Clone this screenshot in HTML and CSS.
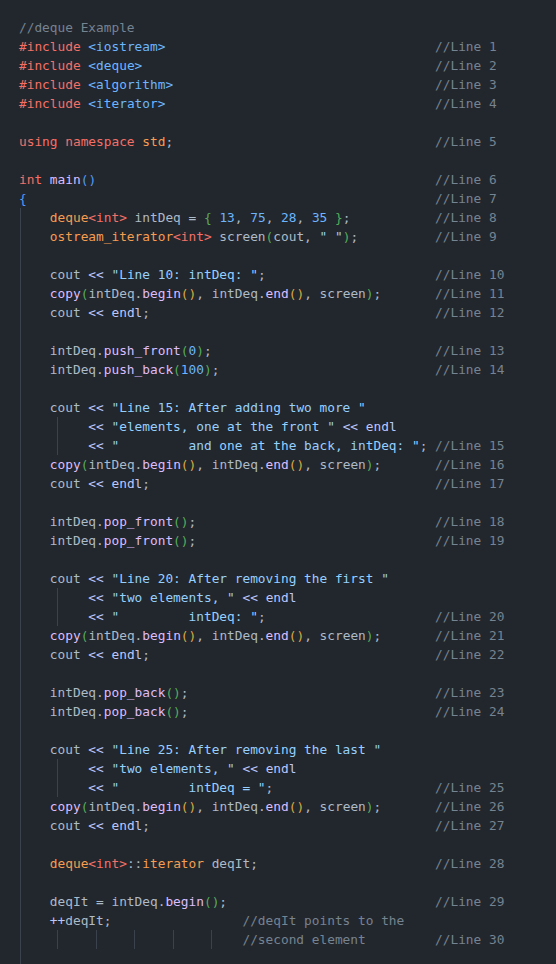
FILE: index.html
```html
<!DOCTYPE html>
<html lang="en">
<head>
<meta charset="utf-8">
<title>deque Example</title>
<link rel="stylesheet" href="styles.css">
</head>
<body>
<div class="code">
  <div class="r"><span><span class="c">//deque Example</span></span></div>
  <div class="r"><span><span class="k">#include</span> <span class="h">&lt;iostream&gt;</span></span><span class="c">//Line 1</span></div>
  <div class="r"><span><span class="k">#include</span> <span class="h">&lt;deque&gt;</span></span><span class="c">//Line 2</span></div>
  <div class="r"><span><span class="k">#include</span> <span class="h">&lt;algorithm&gt;</span></span><span class="c">//Line 3</span></div>
  <div class="r"><span><span class="k">#include</span> <span class="h">&lt;iterator&gt;</span></span><span class="c">//Line 4</span></div>
  <div class="r"></div>
  <div class="r"><span><span class="k">using namespace</span> <span class="t">std</span>;</span><span class="c">//Line 5</span></div>
  <div class="r"></div>
  <div class="r"><span><span class="k">int</span> <span class="f">main</span><span class="b1">()</span></span><span class="c">//Line 6</span></div>
  <div class="r"><span><span class="b1">{</span></span><span class="c">//Line 7</span></div>
  <div class="blk">
    <div class="r"><span>    <span class="t">deque</span><span class="k">&lt;int&gt;</span> intDeq = <span class="b2">{</span> <span class="n">13</span>, <span class="n">75</span>, <span class="n">28</span>, <span class="n">35</span> <span class="b2">}</span>;</span><span class="c">//Line 8</span></div>
    <div class="r"><span>    <span class="t">ostream_iterator</span><span class="k">&lt;int&gt;</span> screen<span class="b2">(</span>cout, <span class="s">" "</span><span class="b2">)</span>;</span><span class="c">//Line 9</span></div>
    <div class="r"></div>
    <div class="r"><span>    cout <span class="o">&lt;&lt;</span> <span class="s">"Line 10: intDeq: "</span>;</span><span class="c">//Line 10</span></div>
    <div class="r"><span>    <span class="f">copy</span><span class="b2">(</span>intDeq.<span class="f">begin</span><span class="b3">()</span>, intDeq.<span class="f">end</span><span class="b3">()</span>, screen<span class="b2">)</span>;</span><span class="c">//Line 11</span></div>
    <div class="r"><span>    cout <span class="o">&lt;&lt;</span> <span class="o">endl</span>;</span><span class="c">//Line 12</span></div>
    <div class="r"></div>
    <div class="r"><span>    intDeq.<span class="f">push_front</span><span class="b2">(</span><span class="n">0</span><span class="b2">)</span>;</span><span class="c">//Line 13</span></div>
    <div class="r"><span>    intDeq.<span class="f">push_back</span><span class="b2">(</span><span class="n">100</span><span class="b2">)</span>;</span><span class="c">//Line 14</span></div>
    <div class="r"></div>
    <div class="r"><span>    cout <span class="o">&lt;&lt;</span> <span class="s">"Line 15: After adding two more "</span></span></div>
    <div class="cont">
      <div class="r"><span>         <span class="o">&lt;&lt;</span> <span class="s">"elements, one at the front "</span> <span class="o">&lt;&lt;</span> <span class="o">endl</span></span></div>
      <div class="r"><span>         <span class="o">&lt;&lt;</span> <span class="s">"         and one at the back, intDeq: "</span>;</span><span class="c">//Line 15</span></div>
    </div>
    <div class="r"><span>    <span class="f">copy</span><span class="b2">(</span>intDeq.<span class="f">begin</span><span class="b3">()</span>, intDeq.<span class="f">end</span><span class="b3">()</span>, screen<span class="b2">)</span>;</span><span class="c">//Line 16</span></div>
    <div class="r"><span>    cout <span class="o">&lt;&lt;</span> <span class="o">endl</span>;</span><span class="c">//Line 17</span></div>
    <div class="r"></div>
    <div class="r"><span>    intDeq.<span class="f">pop_front</span><span class="b2">()</span>;</span><span class="c">//Line 18</span></div>
    <div class="r"><span>    intDeq.<span class="f">pop_front</span><span class="b2">()</span>;</span><span class="c">//Line 19</span></div>
    <div class="r"></div>
    <div class="r"><span>    cout <span class="o">&lt;&lt;</span> <span class="s">"Line 20: After removing the first "</span></span></div>
    <div class="cont">
      <div class="r"><span>         <span class="o">&lt;&lt;</span> <span class="s">"two elements, "</span> <span class="o">&lt;&lt;</span> <span class="o">endl</span></span></div>
      <div class="r"><span>         <span class="o">&lt;&lt;</span> <span class="s">"         intDeq: "</span>;</span><span class="c">//Line 20</span></div>
    </div>
    <div class="r"><span>    <span class="f">copy</span><span class="b2">(</span>intDeq.<span class="f">begin</span><span class="b3">()</span>, intDeq.<span class="f">end</span><span class="b3">()</span>, screen<span class="b2">)</span>;</span><span class="c">//Line 21</span></div>
    <div class="r"><span>    cout <span class="o">&lt;&lt;</span> <span class="o">endl</span>;</span><span class="c">//Line 22</span></div>
    <div class="r"></div>
    <div class="r"><span>    intDeq.<span class="f">pop_back</span><span class="b2">()</span>;</span><span class="c">//Line 23</span></div>
    <div class="r"><span>    intDeq.<span class="f">pop_back</span><span class="b2">()</span>;</span><span class="c">//Line 24</span></div>
    <div class="r"></div>
    <div class="r"><span>    cout <span class="o">&lt;&lt;</span> <span class="s">"Line 25: After removing the last "</span></span></div>
    <div class="cont">
      <div class="r"><span>         <span class="o">&lt;&lt;</span> <span class="s">"two elements, "</span> <span class="o">&lt;&lt;</span> <span class="o">endl</span></span></div>
      <div class="r"><span>         <span class="o">&lt;&lt;</span> <span class="s">"         intDeq = "</span>;</span><span class="c">//Line 25</span></div>
    </div>
    <div class="r"><span>    <span class="f">copy</span><span class="b2">(</span>intDeq.<span class="f">begin</span><span class="b3">()</span>, intDeq.<span class="f">end</span><span class="b3">()</span>, screen<span class="b2">)</span>;</span><span class="c">//Line 26</span></div>
    <div class="r"><span>    cout <span class="o">&lt;&lt;</span> <span class="o">endl</span>;</span><span class="c">//Line 27</span></div>
    <div class="r"></div>
    <div class="r"><span>    <span class="t">deque</span><span class="k">&lt;int&gt;</span>::<span class="t">iterator</span> deqIt;</span><span class="c">//Line 28</span></div>
    <div class="r"></div>
    <div class="r"><span>    deqIt = intDeq.<span class="f">begin</span><span class="b2">()</span>;</span><span class="c">//Line 29</span></div>
    <div class="r"><span>    <span class="o">++</span>deqIt;                 <span class="c">//deqIt points to the</span></span></div>
    <div class="r tabs"><span>                             <span class="c">//second element</span></span><span class="c">//Line 30</span></div>
  </div>
</div>
</body>
</html>
```
FILE: styles.css
```css
html, body {
  margin: 0;
  padding: 0;
  height: 100%;
  overflow: hidden;
  background: #22272e;
}

.code {
  padding: 18px 0 0 19px;
  font-family: "DejaVu Sans Mono", "Liberation Mono", monospace;
  font-size: 12.8px;
  line-height: 19px;
  color: #adbac7;
}

.r {
  display: grid;
  grid-template-columns: 54ch auto;
  height: 19px;
  white-space: pre;
}

.blk {
  padding-bottom: 15px;
  background: linear-gradient(#3b424c, #3b424c) no-repeat 1px 0 / 1px 100%;
}

.cont {
  background: linear-gradient(#3b424c, #3b424c) no-repeat 38px 0 / 1px 100%;
}

.tabs {
  background:
    linear-gradient(#3b424c, #3b424c) no-repeat 38px 0 / 1px 100%,
    linear-gradient(#3b424c, #3b424c) no-repeat 77px 0 / 1px 100%,
    linear-gradient(#3b424c, #3b424c) no-repeat 115px 0 / 1px 100%,
    linear-gradient(#3b424c, #3b424c) no-repeat 154px 0 / 1px 100%,
    linear-gradient(#3b424c, #3b424c) no-repeat 192px 0 / 1px 100%;
}

.c { color: #768390; }
.k { color: #f47067; }
.h { color: #6cb6ff; }
.t { color: #f69d50; }
.f { color: #dcbdfb; }
.s { color: #96d0ff; }
.n { color: #6cb6ff; }
.o { color: #bcc6fa; }
.b1 { color: #539bf5; }
.b2 { color: #57ab5a; }
.b3 { color: #daaa3f; }
```
